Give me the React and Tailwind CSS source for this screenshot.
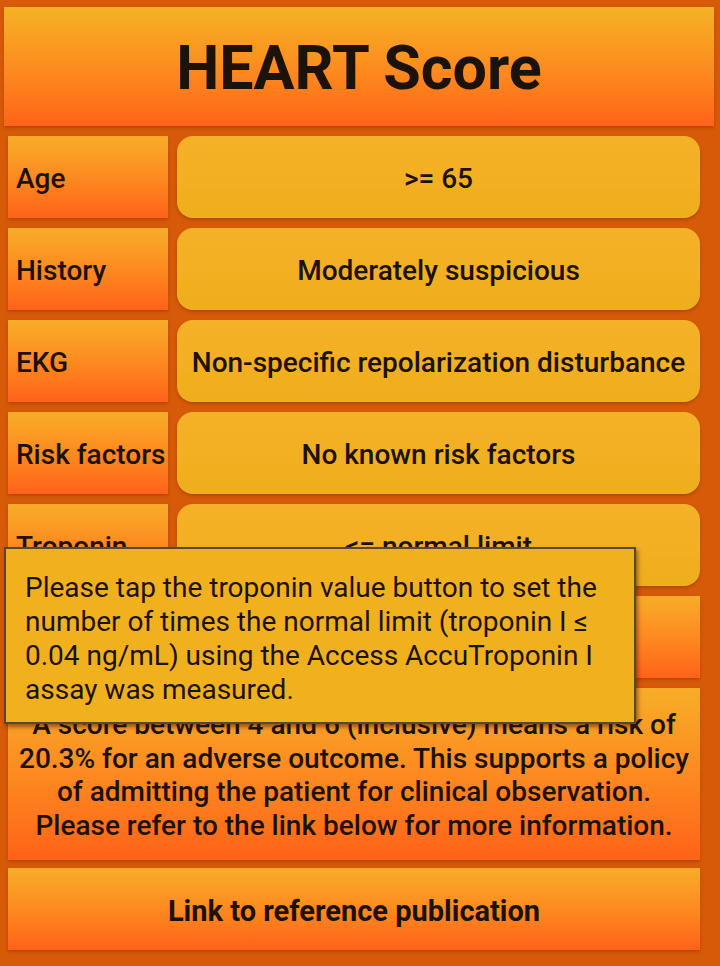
import React from "react";

const ink = "text-[#1c1208]";

function Row({ label, value }) {
  return (
    <div className="flex h-[82px] gap-[9px]">
      <div className="flex w-[160px] items-center bg-gradient-to-b from-[#f7ad28] to-[#ff6119] pl-[8px] pt-[4px] shadow-[0_2px_3px_rgba(120,40,0,0.35)]">
        <span className={`text-[28px] font-medium ${ink}`}>{label}</span>
      </div>
      <div className="flex flex-1 items-center justify-center rounded-[16px] bg-gradient-to-b from-[#f5b128] to-[#efae1c] pt-[4px] shadow-[0_2px_3px_rgba(120,40,0,0.35)]">
        <span className={`text-[28px] font-medium ${ink}`}>{value}</span>
      </div>
    </div>
  );
}

export default function App() {
  return (
    <div
      className="relative h-[966px] w-[720px] overflow-hidden bg-[#d65a08]"
      style={{ fontFamily: "Roboto, 'Noto Sans', sans-serif" }}
    >
      <div className="flex flex-col pt-[7px]">
        <div className="ml-[4px] flex h-[119px] w-[710px] items-center justify-center bg-gradient-to-b from-[#f5b225] to-[#ff6219] pt-[4px] shadow-[0_2px_3px_rgba(120,40,0,0.35)]">
          <h1 className={`text-[61px] font-bold ${ink}`}>HEART Score</h1>
        </div>
        <div className="ml-[8px] mt-[10px] flex w-[692px] flex-col gap-[10px]">
          <Row label="Age" value=">= 65" />
          <Row label="History" value="Moderately suspicious" />
          <Row label="EKG" value="Non-specific repolarization disturbance" />
          <Row label="Risk factors" value="No known risk factors" />
          <Row label="Troponin" value="<= normal limit" />
          <div className="flex h-[82px] items-center justify-center bg-gradient-to-b from-[#f7ad28] to-[#ff6119] shadow-[0_2px_3px_rgba(120,40,0,0.35)]">
            <span className={`text-[30px] font-bold ${ink}`}>Score: 5</span>
          </div>
          <div className="flex h-[172px] items-center justify-center bg-gradient-to-b from-[#f7ad28] to-[#ff6119] px-[6px] pt-[2px] shadow-[0_2px_3px_rgba(120,40,0,0.35)]">
            <p className={`text-center text-[28px] font-medium leading-[33.5px] ${ink}`}>
              A score between 4 and 6 (inclusive) means a risk of 20.3% for an adverse outcome. This supports a policy of admitting the patient for clinical observation. Please refer to the link below for more information.
            </p>
          </div>
        </div>
        <div className="ml-[8px] mt-[8px] flex h-[82px] w-[692px] items-center justify-center bg-gradient-to-b from-[#f7ad28] to-[#ff6119] pt-[6px] shadow-[0_2px_3px_rgba(120,40,0,0.35)]">
          <span className={`text-[29px] font-bold ${ink}`}>Link to reference publication</span>
        </div>
      </div>

      <div className="absolute left-[4px] top-[547px] flex h-[177px] w-[632px] items-center border-2 border-[#55483a] bg-[#f1b11f] pl-[19px] pr-[18px] pt-[6px] shadow-[2px_3px_4px_rgba(60,20,0,0.5)]">
        <p className={`text-[28px] leading-[34px] ${ink}`}>
          Please tap the troponin value button to set the number of times the normal limit (troponin I ≤ 0.04 ng/mL) using the Access AccuTroponin I assay was measured.
        </p>
      </div>
    </div>
  );
}
